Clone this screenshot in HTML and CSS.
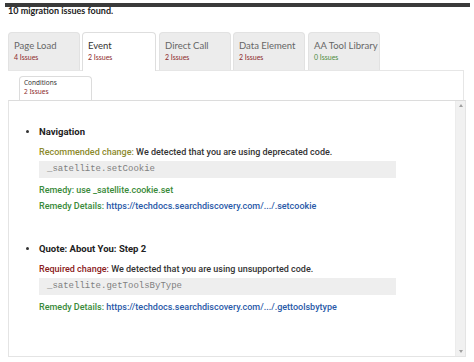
FILE: index.html
```html
<!DOCTYPE html>
<html>
<head>
<meta charset="utf-8">
<link rel="stylesheet" href="styles.css">
</head>
<body>
<div class="page">
  <div class="topbar"></div>
  <div class="heading"><span>10 migration issues found.</span></div>
  <div class="tabs">
    <div class="tab"><div class="tab-label">Page Load</div><div class="count bad">4 Issues</div></div>
    <div class="tab active"><div class="tab-label">Event</div><div class="count bad">2 Issues</div></div>
    <div class="tab"><div class="tab-label">Direct Call</div><div class="count bad">2 Issues</div></div>
    <div class="tab"><div class="tab-label">Data Element</div><div class="count bad">2 Issues</div></div>
    <div class="tab"><div class="tab-label">AA Tool Library</div><div class="count good">0 Issues</div></div>
  </div>
  <div class="panel">
    <div class="subtabs">
      <div class="subtab"><div class="subtab-label">Conditions</div><div class="subcount">2 Issues</div></div>
    </div>
  </div>
  <div class="scrollbox">
    <div class="content">
      <ul class="issues">
        <li class="issue">
          <div class="title">Navigation</div>
          <div class="line"><span class="rec">Recommended change:</span> We detected that you are using deprecated code.</div>
          <div class="code">_satellite.setCookie</div>
          <div class="line remedy">Remedy: use _satellite.cookie.set</div>
          <div class="line remedy">Remedy Details: <span class="link">https://techdocs.searchdiscovery.com/.../.setcookie</span></div>
        </li>
        <li class="issue">
          <div class="title">Quote: About You: Step 2</div>
          <div class="line"><span class="req">Required change:</span> We detected that you are using unsupported code.</div>
          <div class="code">_satellite.getToolsByType</div>
          <div class="line remedy">Remedy Details: <span class="link">https://techdocs.searchdiscovery.com/.../.gettoolsbytype</span></div>
        </li>
      </ul>
    </div>
    <div class="scrollbar">
      <div class="arrow up"></div>
      <div class="arrow down"></div>
    </div>
  </div>
</div>
</body>
</html>
```
FILE: styles.css
```css
html, body {
  margin: 0;
  padding: 0;
  background: #fff;
}
body {
  font-family: Roboto, "Noto Sans", sans-serif;
  color: #333;
}
.page {
  width: 474px;
  height: 362px;
  overflow: hidden;
  position: relative;
}
.topbar {
  margin: 3px 4px 0 5px;
  height: 4px;
  background: #3a3a3a;
}
.heading {
  height: 9px;
  overflow: hidden;
  margin-left: 8px;
}
.heading span {
  display: block;
  margin-top: -2px;
  font-family: Lato, sans-serif;
  font-weight: 700;
  font-size: 9px;
  line-height: 12px;
  color: #222;
  white-space: nowrap;
}
.tabs {
  display: flex;
  gap: 2px;
  margin: 16px 0 0 8px;
  height: 38px;
}
.tab {
  width: 72px;
  box-sizing: border-box;
  background: #ececec;
  border: 1px solid #e2e2e2;
  border-bottom: none;
  border-radius: 4px 4px 0 0;
  padding: 6px 0 0 5px;
  font-family: Lato, sans-serif;
  white-space: nowrap;
}
.tab.active {
  background: #fff;
  border-color: #dedede;
  position: relative;
  z-index: 1;
  height: 39px;
}
.tab:nth-child(2) { width: 74px; }
.tab:nth-child(3) { margin-left: 1px; }
.tab:nth-child(5) { margin-left: 1px; }
.tab-label {
  font-size: 9.5px;
  line-height: 13px;
  color: #666;
}
.tab.active .tab-label { color: #333; }
.count {
  margin-top: 1px;
  font-size: 7px;
  line-height: 9px;
}
.bad { color: #8b2a2a; }
.good { color: #4a8a3a; }
.panel {
  margin-left: 8px;
  width: 456px;
  box-sizing: border-box;
  height: 31px;
  border-top: 1px solid #e6e6e6;
  border-right: 1px solid #e6e6e6;
  padding: 5px 0 0 11px;
}
.subtabs {
  display: flex;
}
.subtab {
  width: 73px;
  height: 25px;
  box-sizing: border-box;
  border: 1px solid #dcdcdc;
  border-bottom: none;
  border-radius: 4px 4px 0 0;
  padding: 1px 0 0 4px;
  font-family: "Noto Sans", sans-serif;
}
.subtab-label {
  font-size: 6.5px;
  line-height: 9px;
  color: #333;
}
.subcount {
  font-size: 6.5px;
  line-height: 9px;
  color: #8b2a2a;
}
.scrollbox {
  display: flex;
  margin-left: 8px;
  width: 458px;
  height: 257px;
  box-sizing: border-box;
  border: 1px solid #e4e4e4;
  border-top: 1px solid #dcdcdc;
  margin-top: -1px;
}
.content {
  flex: 1;
  padding: 24px 0 0 0;
}
.issues {
  margin: 0;
  padding: 0 0 0 30px;
  list-style: disc;
  font-size: 10px;
}
.issue {
  margin-bottom: 28px;
}
.title {
  font-weight: 700;
  font-size: 9.5px;
  line-height: 14px;
  color: #222;
  margin-bottom: 5px;
}
.line {
  font-size: 9px;
  font-weight: 500;
  line-height: 16px;
  color: #333;
  white-space: nowrap;
}
.rec { color: #8d8a2c; }
.req { color: #8b2020; }
.remedy { color: #3a8a3a; }
.link { color: #2a5aa8; }
.code {
  margin: 1px 0 4px 0;
  width: 357px;
  height: 17px;
  background: #eeeeee;
  font-family: "Liberation Mono", monospace;
  font-size: 9px;
  line-height: 17px;
  color: #808080;
  padding-left: 8px;
  box-sizing: border-box;
}
.scrollbar {
  width: 9px;
  background: #f1f1f1;
  border-left: 1px solid #ececec;
  display: flex;
  flex-direction: column;
  justify-content: space-between;
  align-items: center;
  padding: 3px 0;
}
.arrow {
  width: 0;
  height: 0;
  border-left: 2px solid transparent;
  border-right: 2px solid transparent;
}
.arrow.up { border-bottom: 3px solid #a0a0a0; }
.arrow.down { border-top: 3px solid #a0a0a0; }
```
